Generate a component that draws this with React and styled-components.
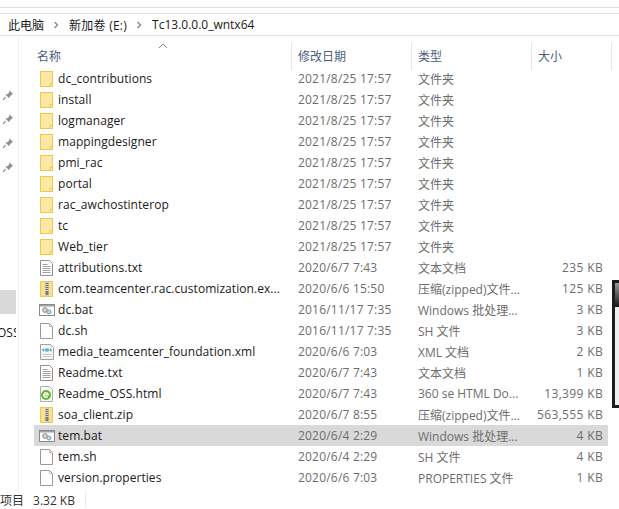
import styled, { createGlobalStyle } from "styled-components";

const GlobalStyle = createGlobalStyle`
  html, body { margin: 0; padding: 0; background: #fff; }
  body { overflow: hidden; }
`;

const FONT = `"Open Sans", "Noto Sans CJK SC", "Liberation Sans", sans-serif`;

const Window = styled.div`
  width: 619px;
  height: 509px;
  display: flex;
  flex-direction: column;
  overflow: hidden;
  position: relative;
  font-family: ${FONT};
  font-size: 12px;
`;

const TopStrip = styled.div`
  height: 7px;
  border-bottom: 1px solid #e0e0e0;
  flex: none;
`;

const AddressBar = styled.div`
  height: 21px;
  margin-top: 5px;
  border-top: 1px solid #e0e0e0;
  border-bottom: 1px solid #e0e0e0;
  display: flex;
  align-items: center;
  padding-left: 8px;
  color: #1a1a1a;
  flex: none;
`;

const Crumb = styled.span`
  white-space: nowrap;
  letter-spacing: ${(p) => p.$spread || 0}px;
`;

const Chevron = styled.svg`
  width: 8px;
  height: 8px;
  margin: 0 9px 0 8px;
  flex: none;
`;

const Body = styled.div`
  flex: 1;
  display: flex;
  min-height: 0;
`;

const Side = styled.div`
  width: 18px;
  flex: none;
  border-right: 1px solid #f0f0f0;
  display: flex;
  flex-direction: column;
  align-items: flex-start;
  overflow: hidden;
`;

const Pin = styled.svg`
  width: 12px;
  height: 12px;
  margin: 0 0 12px 2px;
  flex: none;
`;

const Pins = styled.div`
  margin-top: 53px;
  display: flex;
  flex-direction: column;
`;

const SideSelected = styled.div`
  width: 16px;
  height: 24px;
  background: #d9d9d9;
  margin-top: 105px;
  flex: none;
`;

const SideCut = styled.div`
  margin-top: 10px;
  width: 16px;
  overflow: hidden;
  color: #1a1a1a;
  white-space: nowrap;
  text-indent: -3px;
`;

const List = styled.div`
  flex: 1;
  display: flex;
  flex-direction: column;
  min-width: 0;
  padding-left: 15px;
`;

const HeaderRow = styled.div`
  height: 25px;
  margin-top: 7px;
  display: grid;
  grid-template-columns: 258px 120px 120px 80px;
  align-items: start;
  position: relative;
  flex: none;
`;

const HeaderCell = styled.div`
  height: 27px;
  color: #4c607a;
  padding-left: ${(p) => p.$pad}px;
  border-right: 1px solid #e5e5e5;
  line-height: 28px;
`;

const SortArrow = styled.svg`
  position: absolute;
  left: 124px;
  top: 0;
  width: 10px;
  height: 6px;
`;

const Rows = styled.div`
  display: flex;
  flex-direction: column;
  position: relative;
`;

const Row = styled.div`
  height: 21px;
  width: 574px;
  display: grid;
  grid-template-columns: 258px 120px 120px 71px;
  align-items: center;
  background: ${(p) => (p.$selected ? "#d9d9d9" : "transparent")};
`;

const NameCell = styled.div`
  display: flex;
  align-items: center;
  color: #1a1a1a;
  padding-left: 5px;
  white-space: nowrap;
  overflow: hidden;
  letter-spacing: 0.06px;
`;

const IconBox = styled.span`
  width: 16px;
  height: 16px;
  flex: none;
  margin-right: 3px;
  display: flex;
`;

const DateCell = styled.div`
  color: #6d6d6d;
  padding-left: 6px;
  white-space: nowrap;
  letter-spacing: 0.2px;
`;

const TypeCell = styled.div`
  color: #6d6d6d;
  padding-left: 6px;
  white-space: nowrap;
`;

const SizeCell = styled.div`
  color: #6d6d6d;
  text-align: right;
  white-space: nowrap;
  letter-spacing: 0.35px;
`;

const StatusBar = styled.div`
  height: 18px;
  flex: none;
  display: flex;
  align-items: center;
  color: #333;
  gap: 9px;
`;

const StatusSplit = styled.span`
  width: 1px;
  height: 16px;
  background: #ececec;
  margin-left: 1px;
`;

const BlackEdge = styled.div`
  position: absolute;
  left: 612px;
  top: 280px;
  width: 7px;
  height: 128px;
  box-sizing: border-box;
  border: 3px solid #1c1c1c;
  border-right: 0;
  background: linear-gradient(#9a9a9a, #161616 24px, #f0f0f0 24px);
`;

const FolderIcon = () => (
  <svg width="16" height="16" viewBox="0 0 16 16">
    <rect x="1.5" y="0.5" width="12" height="15" fill="#fde9a4" stroke="#f0c850" />
    <path d="M11 15.5v-3h2.5" fill="#fde9a4" stroke="#f0c850" />
  </svg>
);

const TextIcon = () => (
  <svg width="16" height="16" viewBox="0 0 16 16">
    <path d="M1.5.5h9l3 3v12h-12z" fill="#fff" stroke="#8f8f8f" />
    <path d="M3.5 4.5h5M3.5 6.5h8M3.5 8.5h8M3.5 10.5h8M3.5 12.5h8" stroke="#a0a0a0" />
  </svg>
);

const BlankIcon = () => (
  <svg width="16" height="16" viewBox="0 0 16 16">
    <path d="M1.5.5h9l3 3v12h-12z" fill="#fff" stroke="#9a9a9a" />
    <path d="M10.5.5v3h3" fill="none" stroke="#bdbdbd" />
  </svg>
);

const ZipIcon = () => (
  <svg width="16" height="16" viewBox="0 0 16 16">
    <rect x="1.5" y="0.5" width="12" height="15" fill="#fde08a" stroke="#f0c850" />
    <rect x="6" y="1" width="4" height="14" fill="#d0d0d0" />
    <path d="M6.5 2.5h3M6.5 4.5h3M6.5 6.5h3M6.5 8.5h3" stroke="#6e6e6e" />
    <rect x="6.5" y="10" width="3" height="4" fill="#7b7b7b" />
  </svg>
);

const BatIcon = () => (
  <svg width="16" height="16" viewBox="0 0 16 16">
    <rect x="0.5" y="2.5" width="15" height="11" fill="#fff" stroke="#8a8a8a" />
    <rect x="1" y="3" width="14" height="1.5" fill="#a0a0a0" />
    <circle cx="6" cy="8" r="2.4" fill="#d2d2d2" stroke="#8f8f8f" />
    <circle cx="10" cy="10" r="2" fill="#bcd6ea" stroke="#7f9fb5" />
  </svg>
);

const XmlIcon = () => (
  <svg width="16" height="16" viewBox="0 0 16 16">
    <path d="M1.5.5h10l3 3v12h-13z" fill="#f4f4f4" stroke="#a0a0a0" />
    <ellipse cx="8" cy="6" rx="2.6" ry="1.8" fill="#5fb1d8" />
    <path d="M3.5 6l1.5-1.2M3.5 6l1.5 1.2M12.5 6L11 4.8M12.5 6L11 7.2" stroke="#3d8f5a" />
    <path d="M3.5 10.5h9M3.5 12.5h9" stroke="#c9c9c9" />
  </svg>
);

const HtmlIcon = () => (
  <svg width="16" height="16" viewBox="0 0 16 16">
    <path d="M1.5.5h9l3 3v12h-12z" fill="#f8f8f8" stroke="#b0b0b0" />
    <circle cx="7" cy="9" r="5" fill="#63b32e" />
    <path d="M4.8 8.8h4.5a2.3 2.3 0 1 0-.6 1.8" fill="none" stroke="#fff" strokeWidth="1.5" />
  </svg>
);

const ICONS = {
  folder: FolderIcon,
  text: TextIcon,
  blank: BlankIcon,
  zip: ZipIcon,
  bat: BatIcon,
  xml: XmlIcon,
  html: HtmlIcon,
};

const FILES = [
  { name: "dc_contributions", date: "2021/8/25 17:57", type: "文件夹", icon: "folder" },
  { name: "install", date: "2021/8/25 17:57", type: "文件夹", icon: "folder" },
  { name: "logmanager", date: "2021/8/25 17:57", type: "文件夹", icon: "folder" },
  { name: "mappingdesigner", date: "2021/8/25 17:57", type: "文件夹", icon: "folder" },
  { name: "pmi_rac", date: "2021/8/25 17:57", type: "文件夹", icon: "folder" },
  { name: "portal", date: "2021/8/25 17:57", type: "文件夹", icon: "folder" },
  { name: "rac_awchostinterop", date: "2021/8/25 17:57", type: "文件夹", icon: "folder" },
  { name: "tc", date: "2021/8/25 17:57", type: "文件夹", icon: "folder" },
  { name: "Web_tier", date: "2021/8/25 17:57", type: "文件夹", icon: "folder" },
  { name: "attributions.txt", date: "2020/6/7 7:43", type: "文本文档", size: "235 KB", icon: "text" },
  { name: "com.teamcenter.rac.customization.ex...", date: "2020/6/6 15:50", type: "压缩(zipped)文件...", size: "125 KB", icon: "zip" },
  { name: "dc.bat", date: "2016/11/17 7:35", type: "Windows 批处理...", size: "3 KB", icon: "bat" },
  { name: "dc.sh", date: "2016/11/17 7:35", type: "SH 文件", size: "3 KB", icon: "blank" },
  { name: "media_teamcenter_foundation.xml", date: "2020/6/6 7:03", type: "XML 文档", size: "2 KB", icon: "xml" },
  { name: "Readme.txt", date: "2020/6/7 7:43", type: "文本文档", size: "1 KB", icon: "text" },
  { name: "Readme_OSS.html", date: "2020/6/7 7:43", type: "360 se HTML Do...", size: "13,399 KB", icon: "html" },
  { name: "soa_client.zip", date: "2020/6/7 8:55", type: "压缩(zipped)文件...", size: "563,555 KB", icon: "zip" },
  { name: "tem.bat", date: "2020/6/4 2:29", type: "Windows 批处理...", size: "4 KB", icon: "bat", selected: true },
  { name: "tem.sh", date: "2020/6/4 2:29", type: "SH 文件", size: "4 KB", icon: "blank" },
  { name: "version.properties", date: "2020/6/6 7:03", type: "PROPERTIES 文件", size: "1 KB", icon: "blank" },
];

const ChevronMark = () => (
  <Chevron viewBox="0 0 8 8">
    <path d="M2.5 1l3 3-3 3" fill="none" stroke="#8a8a8a" strokeWidth="1.4" />
  </Chevron>
);

const PinMark = () => (
  <Pin viewBox="0 0 12 12">
    <path d="M7 1l4 4-1.2.6-2 2-.4 2-4-4 2-.4 2-2z" fill="#8a8f96" />
    <path d="M3.6 8.2L1 11" stroke="#8a8f96" strokeWidth="1.2" />
  </Pin>
);

export default function App() {
  return (
    <Window>
      <GlobalStyle />
      <TopStrip />
      <AddressBar>
        <Crumb>此电脑</Crumb>
        <ChevronMark />
        <Crumb $spread={0.25}>新加卷 (E:)</Crumb>
        <ChevronMark />
        <Crumb>Tc13.0.0.0_wntx64</Crumb>
      </AddressBar>
      <Body>
        <Side>
          <Pins>
            <PinMark />
            <PinMark />
            <PinMark />
            <PinMark />
          </Pins>
          <SideSelected />
          <SideCut>OSS</SideCut>
        </Side>
        <List>
          <HeaderRow>
            <SortArrow viewBox="0 0 10 6">
              <path d="M1 5l4-4 4 4" fill="none" stroke="#8a8a8a" />
            </SortArrow>
            <HeaderCell $pad={3}>名称</HeaderCell>
            <HeaderCell $pad={6}>修改日期</HeaderCell>
            <HeaderCell $pad={6}>类型</HeaderCell>
            <HeaderCell $pad={6}>大小</HeaderCell>
          </HeaderRow>
          <Rows>
            {FILES.map((f) => {
              const Icon = ICONS[f.icon];
              return (
                <Row key={f.name} $selected={f.selected}>
                  <NameCell>
                    <IconBox>
                      <Icon />
                    </IconBox>
                    {f.name}
                  </NameCell>
                  <DateCell>{f.date}</DateCell>
                  <TypeCell>{f.type}</TypeCell>
                  <SizeCell>{f.size}</SizeCell>
                </Row>
              );
            })}
          </Rows>
        </List>
      </Body>
      <StatusBar>
        <span>项目</span>
        <span>3.32 KB</span>
        <StatusSplit />
      </StatusBar>
      <BlackEdge />
    </Window>
  );
}
